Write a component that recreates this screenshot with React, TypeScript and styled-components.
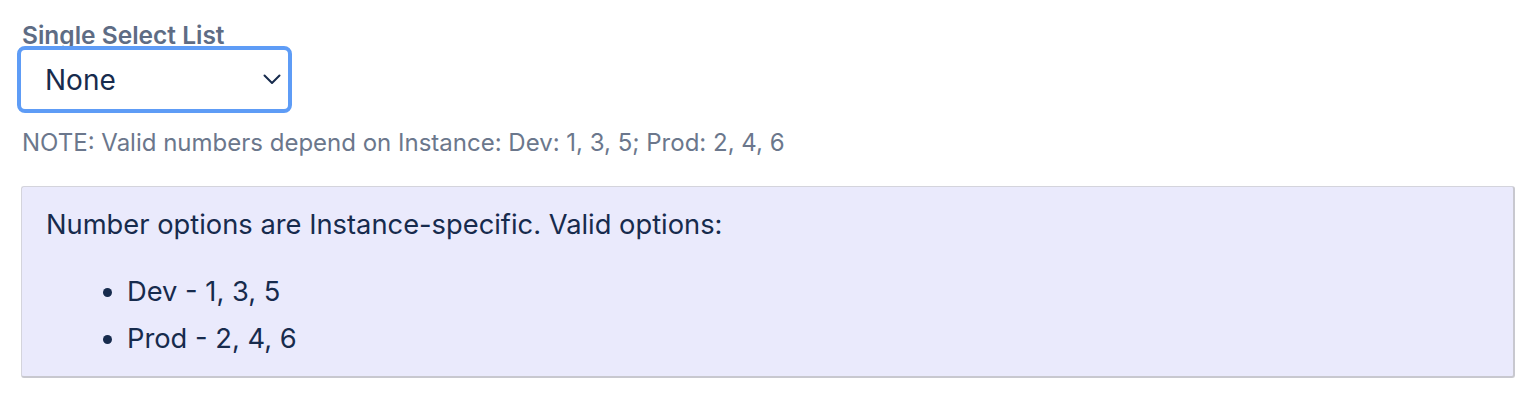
import React from "react";
import styled, { createGlobalStyle } from "styled-components";

const Global = createGlobalStyle`
  html, body { margin: 0; padding: 0; background: #ffffff; }
  body { font-family: Inter, "Noto Sans", sans-serif; -webkit-font-smoothing: antialiased; }
`;

const Page = styled.div`
  padding: 25px 25px 0 21px;
  display: flex;
  flex-direction: column;
`;

const Field = styled.div`
  display: flex;
  flex-direction: column;
  align-items: flex-start;
`;

const Label = styled.label`
  font-size: 24.5px;
  font-weight: 600;
  color: #5e6c84;
  line-height: 21px;
  padding-left: 1px;
`;

const SelectBox = styled.div`
  box-sizing: border-box;
  width: 275px;
  height: 67px;
  margin-left: -4px;
  border: 4px solid #5e9cf6;
  border-radius: 8px;
  background: #ffffff;
  display: flex;
  align-items: center;
  justify-content: space-between;
  padding: 0 7px 0 24px;
`;

const SelectValue = styled.span`
  font-size: 28px;
  line-height: 32px;
  color: #172b4d;
`;

const Chevron = styled.svg`
  width: 18px;
  height: 11px;
`;

const Note = styled.p`
  margin: 16px 0 0 1px;
  font-size: 24px;
  line-height: 28px;
  color: #6b778c;
`;

const Panel = styled.div`
  margin-top: 29px;
  box-sizing: border-box;
  height: 192px;
  background: #eaeafc;
  border: 1px solid #d4d4dc;
  border-right: 2px solid #c8c8cf;
  border-bottom: 2px solid #c8c8cf;
  border-radius: 3px;
  padding: 22px 24px 0;
  color: #172b4d;
`;

const PanelText = styled.p`
  margin: 0;
  font-size: 27.3px;
  line-height: 32px;
`;

const List = styled.ul`
  margin: 35px 0 0 0;
  padding-left: 81px;
  display: flex;
  flex-direction: column;
  gap: 15px;
`;

const Item = styled.li`
  font-size: 27.3px;
  line-height: 32px;
`;

export default function App() {
  return (
    <>
      <Global />
      <Page>
        <Field>
          <Label>Single Select List</Label>
          <SelectBox>
            <SelectValue>None</SelectValue>
            <Chevron viewBox="0 0 18 11">
              <path d="M1.5 1.5 L9 9 L16.5 1.5" fill="none" stroke="#172b4d" strokeWidth="2" strokeLinecap="round" strokeLinejoin="round" />
            </Chevron>
          </SelectBox>
        </Field>
        <Note>NOTE: Valid numbers depend on Instance: Dev: 1, 3, 5; Prod: 2, 4, 6</Note>
        <Panel>
          <PanelText>Number options are Instance-specific. Valid options:</PanelText>
          <List>
            <Item>Dev - 1, 3, 5</Item>
            <Item>Prod - 2, 4, 6</Item>
          </List>
        </Panel>
      </Page>
    </>
  );
}
